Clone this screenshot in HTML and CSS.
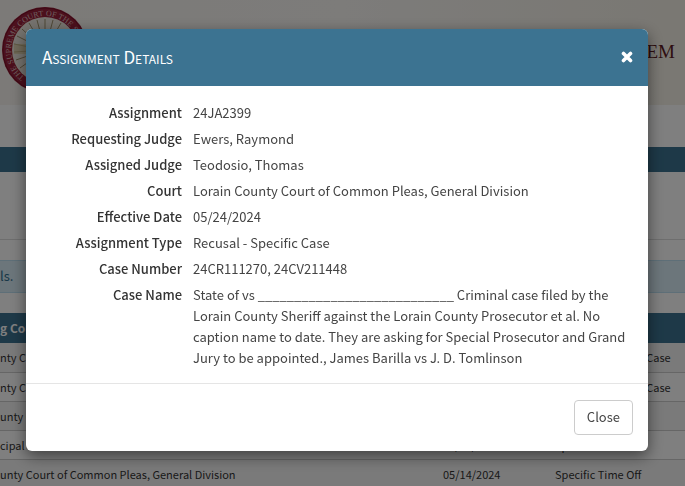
FILE: index.html
```html
<!DOCTYPE html>
<html lang="en">
<head>
<meta charset="utf-8">
<meta name="viewport" content="width=device-width, initial-scale=1">
<title>Assignment Details</title>
<link rel="stylesheet" href="styles.css">
</head>
<body>
<header class="banner">
  <svg class="seal" viewBox="0 0 90 90" aria-hidden="true">
    <defs><path id="rim" d="M45 79 A34 34 0 1 1 45.1 79"/></defs>
    <circle cx="45" cy="45" r="43" fill="#98203a"/>
    <circle cx="45" cy="45" r="42" fill="none" stroke="#7d1028" stroke-width="1"/>
    <circle cx="45" cy="45" r="33" fill="#ece7de"/>
    <g stroke="#9d8f6c" stroke-width="1">
      <path d="M45 45V14M45 45L37 15M45 45L29 18M45 45L22 24M45 45L17 31M45 45L14 39M45 45L14 47M45 45L16 55M45 45L20 63M45 45L53 15M45 45L61 18M45 45L68 24M45 45L73 31M45 45L28 71"/>
    </g>
    <path d="M14 39H45V49H14Z" fill="#d9c898" opacity=".6"/>
    <text class="seal-text"><textPath href="#rim" startOffset="22">THE SUPREME COURT OF THE S</textPath></text>
  </svg>
  <span class="banner-title">EM</span>
</header>
<div class="nav-bar"></div>
<main class="page">
  <div class="notice">ls.</div>
  <table class="list">
    <thead>
      <tr><th class="col-court">g Court</th><th class="col-date"></th><th></th></tr>
    </thead>
    <tbody>
      <tr><td>nty Court</td><td></td><td>Recusal - Specific Case</td></tr>
      <tr><td>nty Court</td><td></td><td>Recusal - Specific Case</td></tr>
      <tr><td>unty Court</td><td></td><td></td></tr>
      <tr><td>cipal Court</td><td>05/14/2024</td><td>Specific</td></tr>
      <tr><td>unty Court of Common Pleas, General Division</td><td>05/14/2024</td><td>Specific Time Off</td></tr>
    </tbody>
  </table>
</main>

<div class="overlay">
  <section class="modal" role="dialog" aria-modal="true" aria-labelledby="modal-title">
    <div class="modal-header">
      <h1 class="modal-title" id="modal-title">Assignment Details</h1>
      <button class="dismiss" type="button" aria-label="Close dialog">
        <svg viewBox="0 0 12 12" aria-hidden="true"><path d="M2.500 2.500L9.500 9.500M9.500 2.500L2.500 9.500" stroke="#fff" stroke-width="3.600" stroke-linecap="round"/></svg>
      </button>
    </div>
    <dl class="details">
      <dt>Assignment</dt><dd>24JA2399</dd>
      <dt>Requesting Judge</dt><dd>Ewers, Raymond</dd>
      <dt>Assigned Judge</dt><dd>Teodosio, Thomas</dd>
      <dt>Court</dt><dd>Lorain County Court of Common Pleas, General Division</dd>
      <dt>Effective Date</dt><dd>05/24/2024</dd>
      <dt>Assignment Type</dt><dd>Recusal - Specific Case</dd>
      <dt>Case Number</dt><dd>24CR111270, 24CV211448</dd>
      <dt>Case Name</dt><dd>State of vs ___________________________ Criminal case filed by the Lorain County Sheriff against the Lorain County Prosecutor et al. No caption name to date. They are asking for Special Prosecutor and Grand Jury to be appointed., James Barilla vs J. D. Tomlinson</dd>
    </dl>
    <div class="modal-footer">
      <button class="close-button" type="button">Close</button>
    </div>
  </section>
</div>
</body>
</html>
```
FILE: styles.css
```css
* { box-sizing: border-box; }

body {
  margin: 0;
  overflow: hidden;
  background: #fff;
  color: #333;
  font: 13px/21px "Noto Sans CJK SC", "Noto Sans", sans-serif;
}

/* Page behind the dialog */
.banner {
  display: flex;
  align-items: flex-start;
  justify-content: space-between;
  height: 105px;
  padding: 5px 10px 0 0;
  background: linear-gradient(90deg, #f8f5f0, #faf8f5 50%, #f4f0e6);
}
.seal { width: 90px; height: 90px; }
.seal-text {
  fill: #dcbcbc;
  font: 8px "Liberation Serif", serif;
}
.banner-title {
  padding-top: 35px;
  color: #5c1a22;
  font: 19px/24px "Liberation Serif", serif;
}
.nav-bar {
  height: 25px;
  margin-top: 42px;
  background: #3c7391;
}
.page {
  margin-top: 67px;
  padding-top: 20px;
  border-top: 1px solid #ddd;
}
.notice {
  height: 33px;
  padding: 4px 0;
  border: solid #bcdff1;
  border-width: 1px 0;
  background: #d9edf7;
  color: #31708f;
}
.list {
  width: 100%;
  margin-top: 20px;
  border-collapse: collapse;
  table-layout: fixed;
  font-size: 11px;
  line-height: 20px;
}
.list th {
  height: 30px;
  padding: 0;
  background: #3c7391;
  color: #fff;
  font-size: 12px;
  text-align: left;
}
.list td {
  height: 29px;
  padding: 4px 0;
  border-bottom: 1px solid #ccc;
  white-space: nowrap;
}
.list tbody tr:nth-child(odd) { background: #f5f5f5; }
.col-court { width: 443px; }
.col-date { width: 112px; }

/* Dialog */
.overlay {
  position: fixed;
  inset: 0;
  padding: 29px 37px 0 26px;
  background: rgba(0, 0, 0, .5);
}
.modal {
  overflow: hidden;
  border-radius: 6px;
  background: #fff;
  box-shadow: 0 5px 15px rgba(0, 0, 0, .5);
}
.modal-header {
  display: flex;
  align-items: center;
  justify-content: space-between;
  padding: 16px 15px 17px 16px;
  background: #3c7391;
  color: #fff;
}
.modal-title {
  margin: 0;
  font-size: 17px;
  font-variant: small-caps;
  font-weight: 400;
  line-height: 24px;
}
.dismiss {
  display: flex;
  padding: 0;
  border: 0;
  background: none;
}
.dismiss svg { width: 12px; height: 12px; }
.details {
  display: grid;
  grid-template-columns: 156px 1fr;
  gap: 5px 11px;
  margin: 0;
  padding: 16px 15px 15px 0;
}
.details dt {
  font-weight: 500;
  text-align: right;
}
.details dd {
  margin: 0;
  color: #444;
}
.modal-footer {
  display: flex;
  justify-content: flex-end;
  padding: 16px 15px;
  border-top: 1px solid #e5e5e5;
}
.close-button {
  padding: 5px 12px 7px;
  border: 1px solid #ccc;
  border-radius: 4px;
  background: #fff;
  color: #444;
  font: inherit;
}
```
